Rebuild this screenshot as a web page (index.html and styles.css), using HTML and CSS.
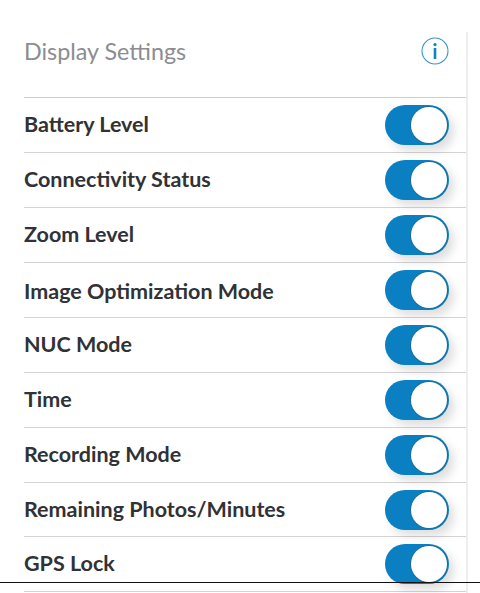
FILE: index.html
```html
<!DOCTYPE html>
<html lang="en">
<head>
<meta charset="utf-8">
<title>Display Settings</title>
<link rel="stylesheet" href="styles.css">
</head>
<body>
<main class="panel">
  <header class="head">
    <h1 class="title">Display Settings</h1>
    <svg class="info" viewBox="0 0 28 28" aria-hidden="true">
      <circle cx="14" cy="14" r="13" fill="none" stroke="#3a93c8" stroke-width="1.1"/>
      <circle cx="14" cy="7.6" r="1.6" fill="#0a84c6"/>
      <rect x="12.7" y="11" width="2.6" height="11" fill="#0a84c6"/>
    </svg>
  </header>
  <ul class="list">
    <li class="row"><span class="label">Battery Level</span><span class="toggle"><span class="knob"></span></span></li>
    <li class="row"><span class="label">Connectivity Status</span><span class="toggle"><span class="knob"></span></span></li>
    <li class="row"><span class="label">Zoom Level</span><span class="toggle"><span class="knob"></span></span></li>
    <li class="row"><span class="label label-low">Image Optimization Mode</span><span class="toggle"><span class="knob"></span></span></li>
    <li class="row"><span class="label">NUC Mode</span><span class="toggle"><span class="knob"></span></span></li>
    <li class="row"><span class="label">Time</span><span class="toggle"><span class="knob"></span></span></li>
    <li class="row"><span class="label">Recording Mode</span><span class="toggle"><span class="knob"></span></span></li>
    <li class="row row-short"><span class="label">Remaining Photos/Minutes</span><span class="toggle"><span class="knob"></span></span></li>
    <li class="row"><span class="label">GPS Lock</span><span class="toggle"><span class="knob"></span></span></li>
  </ul>
  <div class="scanline"></div>
</main>
</body>
</html>
```
FILE: styles.css
```css
html, body {
  margin: 0;
  padding: 0;
  height: 593px;
  overflow: hidden;
  background: #fff;
}
.panel {
  position: relative;
  height: 593px;
  padding-top: 32px;
  box-sizing: border-box;
  font-family: Lato, "Open Sans", "Liberation Sans", sans-serif;
}
.panel::after {
  content: "";
  position: absolute;
  left: 466px;
  top: 32px;
  bottom: 0;
  width: 2px;
  background: #eeeeee;
}
.head {
  display: flex;
  align-items: center;
  justify-content: space-between;
  height: 65px;
  box-sizing: border-box;
  margin: 0 0 0 24px;
  width: 425px;
  padding-bottom: 27px;
}
.title {
  margin: 0;
  font-size: 23.3px;
  font-weight: 400;
  color: #8b8d90;
  line-height: 40px;
}
.info {
  width: 28px;
  height: 28px;
}
.list {
  list-style: none;
  margin: 0 0 0 24px;
  padding: 0;
  width: 442px;
  border-top: 1px solid #cfcfcf;
}
.row {
  display: flex;
  align-items: center;
  justify-content: space-between;
  height: 54px;
  padding-right: 17px;
  border-bottom: 1px solid #d4d4d4;
}
.row-short {
  height: 53px;
}
.label {
  padding-bottom: 2px;
  font-size: 21.5px;
  font-weight: 700;
  color: #303235;
}
.label-low {
  padding-bottom: 0;
  padding-top: 2px;
}
.toggle {
  display: flex;
  justify-content: flex-end;
  align-items: center;
  width: 64px;
  height: 40px;
  flex: none;
  box-sizing: border-box;
  padding-right: 2px;
  border-radius: 20px;
  background: #0a7fc1;
  box-shadow: 5px 6px 10px rgba(0, 0, 0, 0.13);
}
.knob {
  width: 36px;
  height: 36px;
  border-radius: 50%;
  background: #fff;
  box-shadow: 0 0 0 1px #1c6f97;
}
.scanline {
  position: absolute;
  left: 0;
  right: 0;
  top: 582px;
  height: 1px;
  background: #111;
  z-index: 2;
}
```
